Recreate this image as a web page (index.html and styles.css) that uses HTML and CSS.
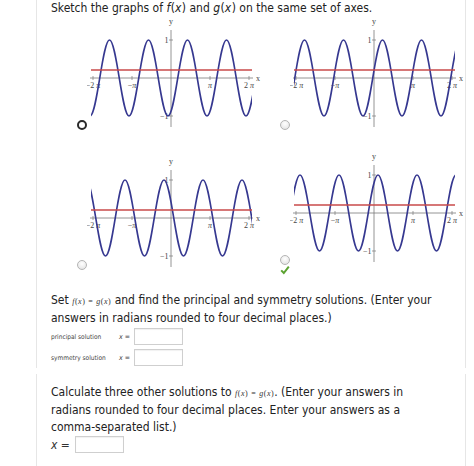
FILE: index.html
```html
<!DOCTYPE html>
<html>
<head>
<meta charset="utf-8">
<link rel="stylesheet" href="styles.css">
</head>
<body>
<svg class="defs" width="0" height="0">
  <defs>
    <path id="wave" d="M0,0 c3.53,0 6.57,18.53 9.75,38 c3.18,19.47 6.22,38 9.75,38 c3.53,0 6.57,-18.53 9.75,-38 c3.18,-19.47 6.22,-38 9.75,-38 c3.53,0 6.57,18.53 9.75,38 c3.18,19.47 6.22,38 9.75,38 c3.53,0 6.57,-18.53 9.75,-38 c3.18,-19.47 6.22,-38 9.75,-38 c3.53,0 6.57,18.53 9.75,38 c3.18,19.47 6.22,38 9.75,38 c3.53,0 6.57,-18.53 9.75,-38 c3.18,-19.47 6.22,-38 9.75,-38 c3.53,0 6.57,18.53 9.75,38 c3.18,19.47 6.22,38 9.75,38 c3.53,0 6.57,-18.53 9.75,-38 c3.18,-19.47 6.22,-38 9.75,-38 c3.53,0 6.57,18.53 9.75,38 c3.18,19.47 6.22,38 9.75,38 c3.53,0 6.57,-18.53 9.75,-38 c3.18,-19.47 6.22,-38 9.75,-38"/>
    <clipPath id="clip"><rect x="-80" y="-60" width="161" height="120"/></clipPath>
    <g id="axes">
      <line class="ax" x1="0" y1="-48" x2="0" y2="49"/>
      <line class="ax" x1="-81" y1="0" x2="82" y2="0"/>
      <path class="tk" d="M-78,-2v4M-39,-2v4M39,-2v4M78,-2v4M-2,-38h4M-2,38h4"/>
      <text class="lb" x="0" y="-54" text-anchor="middle">y</text>
      <text class="lb" x="85" y="2.5">x</text>
      <text class="lb" x="-2.5" y="-35.5" text-anchor="end">1</text>
      <text class="lb" x="-2.5" y="40.5" text-anchor="end">−1</text>
      <text class="lb" x="-78" y="10" text-anchor="middle">−2 <tspan class="pi">π</tspan></text>
      <text class="lb" x="-39" y="10" text-anchor="middle">−<tspan class="pi">π</tspan></text>
      <text class="lb" x="39" y="10" text-anchor="middle"><tspan class="pi">π</tspan></text>
      <text class="lb" x="78" y="10" text-anchor="middle">2 <tspan class="pi">π</tspan></text>
    </g>
  </defs>
</svg>

<div class="panel p1">
  <div class="text">
    <p class="title">Sketch the graphs of <i>f</i>(<i>x</i>) and <i>g</i>(<i>x</i>) on the same set of axes.</p>
  </div>
  <div class="choices">
    <div class="choice">
      <div class="opt">
        <span class="radio sel"></span>
        <svg class="graph" viewBox="-84 -62 178 114">
          <use href="#axes"/>
          <g clip-path="url(#clip)"><use class="blue" href="#wave" x="-100.5" y="-38"/></g>
          <line class="red" x1="-80" y1="-8" x2="81" y2="-8"/>
        </svg>
      </div>
    </div>
    <div class="choice">
      <div class="opt">
        <span class="radio"></span>
        <svg class="graph" viewBox="-84 -62 178 114">
          <use href="#axes"/>
          <g clip-path="url(#clip)"><use class="blue" href="#wave" x="-108.5" y="-38"/></g>
          <line class="red" x1="-80" y1="-8" x2="81" y2="-8"/>
        </svg>
      </div>
    </div>
    <div class="choice">
      <div class="opt">
        <span class="radio"></span>
        <svg class="graph" viewBox="-84 -62 178 114">
          <use href="#axes"/>
          <g clip-path="url(#clip)"><use class="blue" href="#wave" x="-85" y="-38"/></g>
          <line class="red" x1="-80" y1="-8" x2="81" y2="-8"/>
        </svg>
      </div>
    </div>
    <div class="choice">
      <div class="opt">
        <span class="radio"></span>
        <svg class="graph" viewBox="-84 -62 178 114">
          <use href="#axes"/>
          <g clip-path="url(#clip)"><use class="blue" href="#wave" x="-113" y="-38"/></g>
          <line class="red" x1="-80" y1="-8" x2="81" y2="-8"/>
        </svg>
      </div>
      <svg class="check" viewBox="0 0 10 10"><path d="M1.2,5.4 L3.8,8 L8.8,1.6"/></svg>
    </div>
  </div>
  <div class="text">
    <p class="q">Set <span class="eq"><i>f</i>(<i>x</i>)<span class="eqs">=</span><i>g</i>(<i>x</i>)</span> and find the principal and symmetry solutions. (Enter your answers in radians rounded to four decimal places.)</p>
  </div>
  <div class="ans first"><span class="lbl">principal solution</span><span class="xeq"><i>x</i> =</span><span class="box"></span></div>
  <div class="ans"><span class="lbl">symmetry solution</span><span class="xeq"><i>x</i> =</span><span class="box"></span></div>
</div>

<div class="panel p2">
  <div class="text">
    <p class="q">Calculate three other solutions to <span class="eq"><i>f</i>(<i>x</i>)<span class="eqs">=</span><i>g</i>(<i>x</i>)</span>. (Enter your answers in radians rounded to four decimal places. Enter your answers as a comma-separated list.)</p>
  </div>
  <div class="last"><span class="xbig"><i>x</i> =</span><span class="box"></span></div>
</div>
</body>
</html>
```

FILE: styles.css
```css
body {
  margin: 0;
  background: #fff;
  color: #222;
  font-family: "DejaVu Sans Condensed", "DejaVu Sans", sans-serif;
  font-stretch: condensed;
}

.defs {
  display: block;
  width: 0;
  height: 0;
  overflow: hidden;
}

.panel {
  margin-left: 36px;
  width: 400px;
  padding: 0 14px;
  border-left: 1px solid #e6e6e6;
  border-right: 1px solid #e6e6e6;
}

.p1 {
  padding-bottom: 2px;
}

.p2 {
  margin-top: 6px;
  padding-top: 10px;
  height: 83px;
}

.text {
  max-width: 385px;
}

.title {
  margin: 0;
  font-size: 12px;
  line-height: 16px;
}

.title i {
  padding-right: 0.5px;
}

.choices {
  display: grid;
  grid-template-columns: 203px 203px;
  align-items: center;
  row-gap: 21px;
  padding-left: 26px;
}

.opt {
  display: flex;
  align-items: flex-end;
}

.radio {
  flex: none;
  width: 10px;
  height: 10px;
  box-sizing: border-box;
  border-radius: 50%;
  border: 1px solid #b4b4b4;
  background: radial-gradient(circle at 50% 35%, #ffffff 0%, #e9e9e9 70%, #d6d6d6 100%);
}

.radio.sel {
  border: 2.6px solid #2a2a2a;
  background: #fff;
}

.graph {
  display: block;
  width: 178px;
  height: 114px;
}

.ax {
  stroke: #7a7a7a;
  stroke-width: 0.8;
}

.tk {
  stroke: #7a7a7a;
  stroke-width: 0.7;
  fill: none;
}

.lb {
  font-family: "Liberation Serif", serif;
  font-size: 8px;
  fill: #444;
}

.pi {
  font-style: italic;
}

.blue {
  fill: none;
  stroke: #363890;
  stroke-width: 1.6;
}

.red {
  stroke: #c94a4a;
  stroke-width: 1.5;
}

.check {
  display: block;
  width: 10px;
  height: 10px;
}

.check path {
  fill: none;
  stroke: #5ca331;
  stroke-width: 2;
}

.q {
  margin: 16.5px 0 0;
  font-size: 12px;
  line-height: 17px;
}

.p2 .q {
  margin-top: 0;
}

.eq {
  font-family: "Liberation Serif", serif;
  font-size: 8px;
  letter-spacing: 0.5px;
  color: #333;
}

.eqs {
  margin: 0 3px;
}

.ans {
  display: flex;
  align-items: center;
  height: 17px;
  margin-top: 4px;
}

.ans.first {
  margin-top: 1.5px;
}

.lbl {
  width: 68px;
  font-size: 6.5px;
  color: #444;
}

.xeq {
  width: 11px;
  margin-right: 4px;
  text-align: right;
  font-size: 7px;
  white-space: nowrap;
  color: #444;
}

.box {
  display: block;
  width: 49px;
  height: 17px;
  box-sizing: border-box;
  border: 1px solid #cfcfcf;
  background: #fff;
  box-shadow: inset 0 1px 1px rgba(0, 0, 0, 0.06);
}

.last {
  display: flex;
  align-items: center;
  gap: 5px;
  height: 17px;
}

.xbig {
  font-size: 12px;
  color: #333;
}
```
